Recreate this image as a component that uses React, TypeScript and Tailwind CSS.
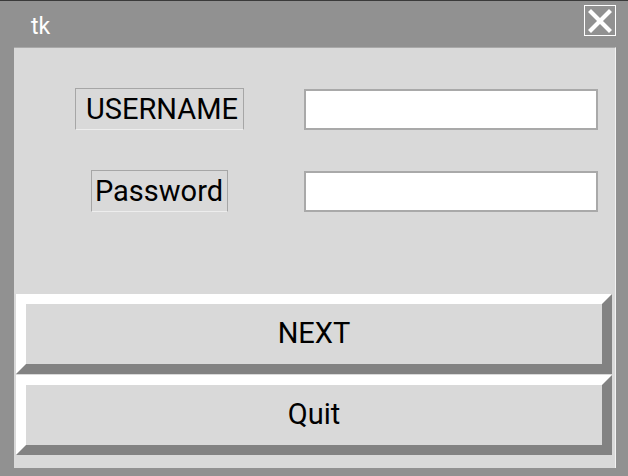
export default function App() {
    return (
        <div
            className="w-[628px] h-[476px] bg-[#919191] border-t border-[#3a3a3a] flex flex-col overflow-hidden"
            style={{ fontFamily: 'Roboto, "Liberation Sans", sans-serif' }}
        >
            {/* Title bar */}
            <div className="h-[46px] flex items-center justify-between pl-[31px] pr-[12px]">
                <span className="text-white text-[23px] leading-none mt-[5px]">tk</span>
                <button className="w-[32px] h-[31px] border border-white flex items-center justify-center -mt-[7px]">
                    <svg width="24" height="24" viewBox="0 0 24 24">
                        <path d="M3 3L21 21M21 3L3 21" stroke="white" strokeWidth="4.2" strokeLinecap="square" />
                    </svg>
                </button>
            </div>

            {/* Window body */}
            <div className="ml-[14px] mr-[12px] mb-[8px] flex-1 bg-[#d9d9d9] border-t border-t-[#a9a9a9] border-r border-r-[#f2f2f2] flex flex-col">
                <div className="grid grid-cols-[290px_1fr] gap-y-[40px] pt-[40px] pr-[17px] items-center">
                    <div className="flex justify-center">
                        <div className="w-[169px] h-[42px] border border-[#a6a6a6] border-b-[#ededed] flex items-center justify-center pl-[6px] pt-[2px] text-[29px] text-black">
                            USERNAME
                        </div>
                    </div>
                    <input className="h-[41px] w-full bg-white border-2 border-[#a9a9a9] outline-none" />

                    <div className="flex justify-center">
                        <div className="w-[137px] h-[42px] border border-[#a6a6a6] border-b-[#ededed] flex items-center justify-center pt-[2px] text-[29px] text-black">
                            Password
                        </div>
                    </div>
                    <input type="password" className="h-[41px] w-full bg-white border-2 border-[#a9a9a9] outline-none" />
                </div>

                <div className="flex-1" />

                {/* Buttons */}
                <div className="flex flex-col gap-[1px] pl-[2px] pr-[3px] pb-[13px]">
                    <button className="h-[80px] border-[10px] border-t-white border-l-white border-b-[#828282] border-r-[#828282] bg-[#d9d9d9] text-[29px] text-black">
                        NEXT
                    </button>
                    <button className="h-[80px] border-[10px] border-t-white border-l-white border-b-[#828282] border-r-[#828282] bg-[#d9d9d9] text-[29px] text-black">
                        Quit
                    </button>
                </div>
            </div>
        </div>
    );
}
